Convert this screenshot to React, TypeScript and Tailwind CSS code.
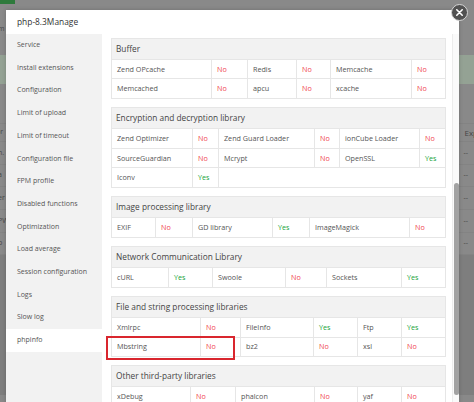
import React from "react";

type Section = { title: string; cols: string; rows: string[][] };

const sections: Section[] = [
  {
    title: "Buffer",
    cols: "grid-cols-[100px_36px_49px_34px_81px_35px]",
    rows: [
      ["Zend OPcache", "No", "Redis", "No", "Memcache", "No"],
      ["Memcached", "No", "apcu", "No", "xcache", "No"],
    ],
  },
  {
    title: "Encryption and decryption library",
    cols: "grid-cols-[81px_26px_96px_25px_80px_27px]",
    rows: [
      ["Zend Optimizer", "No", "Zend Guard Loader", "No", "ionCube Loader", "No"],
      ["SourceGuardian", "No", "Mcrypt", "No", "OpenSSL", "Yes"],
      ["Iconv", "Yes"],
    ],
  },
  {
    title: "Image processing library",
    cols: "grid-cols-[44px_37px_80px_37px_100px_37px]",
    rows: [["EXIF", "No", "GD library", "Yes", "ImageMagick", "No"]],
  },
  {
    title: "Network Communication Library",
    cols: "grid-cols-[57px_44px_73px_41px_75px_45px]",
    rows: [["cURL", "Yes", "Swoole", "No", "Sockets", "Yes"]],
  },
  {
    title: "File and string processing libraries",
    cols: "grid-cols-[89px_40px_73px_44px_44px_45px]",
    rows: [
      ["Xmlrpc", "No", "FileInfo", "Yes", "Ftp", "Yes"],
      ["Mbstring", "No", "bz2", "No", "xsl", "No"],
    ],
  },
  {
    title: "Other third-party libraries",
    cols: "grid-cols-[79px_45px_79px_43px_44px_45px]",
    rows: [["xDebug", "No", "phalcon", "No", "yaf", "No"]],
  },
];

const menu = [
  "Service",
  "Install extensions",
  "Configuration",
  "Limit of upload",
  "Limit of timeout",
  "Configuration file",
  "FPM profile",
  "Disabled functions",
  "Optimization",
  "Load average",
  "Session configuration",
  "Logs",
  "Slow log",
  "phpinfo",
];

function Cell({ v, last }: { v: string; last: boolean }) {
  const color =
    v === "No" ? "text-[#f0484e]" : v === "Yes" ? "text-[#20a53a]" : "text-[#555]";
  return (
    <div
      className={`flex items-center pl-[5px] whitespace-nowrap overflow-hidden ${color} ${
        last ? "" : "border-r border-[#e6e6e6]"
      }`}
    >
      {v}
    </div>
  );
}

function Table({ s }: { s: Section }) {
  return (
    <div className="border border-[#e6e6e6] w-[335px]">
      <div className="h-[20px] bg-[#f2f2f2] flex items-center pl-[4px] text-[8.3px] text-[#444]">
        {s.title}
      </div>
      {s.rows.map((r, i) => {
        const highlight = r[0] === "Mbstring";
        return (
          <div
            key={i}
            className={`relative grid ${s.cols} h-[19.4px] border-t border-[#e6e6e6] text-[7.2px]`}
          >
            {r.length === 6 ? (
              r.map((v, j) => <Cell key={j} v={v} last={j === 5} />)
            ) : (
              <>
                <Cell v={r[0]} last={false} />
                <Cell v={r[1]} last={false} />
                <div className="col-span-4" />
              </>
            )}
            {highlight && (
              <div className="absolute left-[-6px] top-[-2px] w-[129px] h-[24px] border-2 border-[#d9262e]" />
            )}
          </div>
        );
      })}
    </div>
  );
}

export default function App() {
  return (
    <div
      className="relative w-[474px] h-[402px] overflow-hidden bg-[#898989]"
      style={{ fontFamily: '"Open Sans", "Liberation Sans", sans-serif' }}
    >
      {/* dimmed page behind */}
      <div className="flex flex-col w-full text-[7px] text-[#474747]">
        <div className="h-[4px] flex">
          <div className="w-[15px] bg-[#2e7a3c]" />
        </div>
        <div className="h-[51px] flex items-center">
          <span className="-ml-[2px]">m</span>
        </div>
        <div className="h-[29px] bg-[#94a294]" />
        <div className="h-[40px] border-b border-[#838383]" />
        <div className="h-[18px] flex items-center justify-between border-b border-[#838383]">
          <span className="-ml-[4px]">or</span>
          <span className="mr-[-4px] text-[8px]">Exp</span>
        </div>
        {["n.", "a", "er", "PW", "b"].map((t) => (
          <div
            key={t}
            className="h-[22.7px] flex items-center justify-between border-b border-[#838383]"
          >
            <span className="-ml-[2px]">{t}</span>
            <span className="mr-[6px]">--</span>
          </div>
        ))}
        <div className="h-[140px] bg-[#7e7e7e]" />
      </div>

      {/* modal */}
      <div className="absolute left-[6px] top-[10px] w-[453px] h-[420px] bg-white flex flex-col shadow-[0_0_4px_rgba(0,0,0,0.2)]">
        <div className="h-[24px] shrink-0 flex items-center pl-[11px] text-[8.4px] text-[#333]">
          php-8.3Manage
        </div>
        <div className="flex flex-1">
          <div className="w-[96px] bg-[#f2f2f2] flex flex-col">
            {menu.map((m) => (
              <div
                key={m}
                className={`h-[22.7px] flex items-center pl-[11px] text-[7px] text-[#555] ${
                  m === "phpinfo" ? "bg-white" : ""
                }`}
              >
                {m}
              </div>
            ))}
          </div>
          <div className="flex-1 flex">
            <div className="flex-1 pl-[9px] pr-[6px] pt-[4px] flex flex-col gap-[8.6px]">
              {sections.map((s) => (
                <Table key={s.title} s={s} />
              ))}
            </div>
            <div className="w-[7px] flex flex-col border-l border-[#ececec] bg-[#fafafa]">
              <div className="h-[149px]" />
              <div className="h-[212px] w-[5px] ml-[1px] rounded-[3px] bg-[#a2a2a2]" />
            </div>
          </div>
        </div>
      </div>

      {/* close button */}
      <div className="absolute left-[451px] top-[4px] w-[17px] h-[17px] rounded-full bg-[#525252] border border-[#d6d6d6] flex items-center justify-center">
        <svg width="9" height="9" viewBox="0 0 10 10">
          <path d="M2 2 L8 8 M8 2 L2 8" stroke="white" strokeWidth="1.8" strokeLinecap="round" />
        </svg>
      </div>
    </div>
  );
}
